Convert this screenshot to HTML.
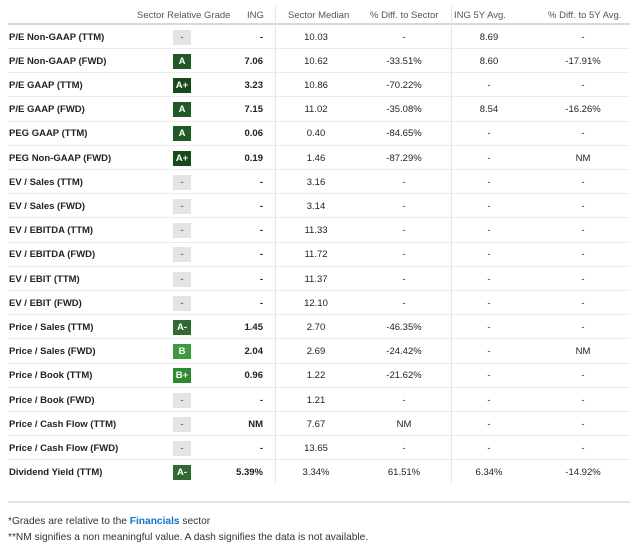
<!DOCTYPE html>
<html><head><meta charset="utf-8"><style>
body{margin:0;width:640px;height:549px;background:#fff;font-family:"Liberation Sans",Arial,sans-serif;font-size:9.5px;color:#222;position:relative;overflow:hidden}
.a{position:absolute}
.h{top:10px;color:#555;font-size:9.5px;white-space:nowrap}
.r{position:absolute;left:8px;width:622px;height:24px;border-bottom:1px solid #ececec}
.r div{position:absolute;top:1.5px;line-height:24px;white-space:nowrap}
.l{left:1px;font-weight:bold;color:#222}
.r .g{left:165px;top:5.5px;width:18px;height:15px;line-height:15px;text-align:center;font-weight:bold;color:#fff;font-size:9.5px}
.ing{right:367px;font-weight:bold;text-align:right}
.c1{left:268px;width:80px;text-align:center}
.c2{left:350px;width:92px;text-align:center}
.c3{left:443px;width:76px;text-align:center}
.c4{left:525px;width:100px;text-align:center}
.r .gr{background:#e3e4e6;color:#777}
.A{background:#1f5a26}.Ap{background:#174a1a}.Am{background:#2f6a30}.B{background:#3e9a3e}.Bp{background:#2e8a30}
</style></head><body>
<div class="a h" style="left:137px">Sector Relative Grade</div>
<div class="a h" style="left:247px">ING</div>
<div class="a h" style="left:288px">Sector Median</div>
<div class="a h" style="left:370px">% Diff. to Sector</div>
<div class="a h" style="left:454px">ING 5Y Avg.</div>
<div class="a h" style="left:548px">% Diff. to 5Y Avg.</div>
<div class="a" style="left:8px;top:23px;width:622px;height:2px;background:#d9d9d9"></div>
<div class="a" style="left:275px;top:6px;width:1px;height:478px;background:#e6e6e6"></div>
<div class="a" style="left:451px;top:6px;width:1px;height:478px;background:#e6e6e6"></div>
<div id="t"></div>
<div class="a" style="left:8px;top:501px;width:622px;height:2px;background:#e6e6e6"></div>
<div class="a" style="left:8px;top:516px;font-size:10.2px;color:#333">*Grades are relative to the <span style="color:#1a6fd0;font-weight:bold">Financials</span> sector</div>
<div class="a" style="left:8px;top:532px;font-size:10.2px;color:#333">**NM signifies a non meaningful value. A dash signifies the data is not available.</div>
<script>
var d=[
["P/E Non-GAAP (TTM)","-","gr","-","10.03","-","8.69","-"],
["P/E Non-GAAP (FWD)","A","A","7.06","10.62","-33.51%","8.60","-17.91%"],
["P/E GAAP (TTM)","A+","Ap","3.23","10.86","-70.22%","-","-"],
["P/E GAAP (FWD)","A","A","7.15","11.02","-35.08%","8.54","-16.26%"],
["PEG GAAP (TTM)","A","A","0.06","0.40","-84.65%","-","-"],
["PEG Non-GAAP (FWD)","A+","Ap","0.19","1.46","-87.29%","-","NM"],
["EV / Sales (TTM)","-","gr","-","3.16","-","-","-"],
["EV / Sales (FWD)","-","gr","-","3.14","-","-","-"],
["EV / EBITDA (TTM)","-","gr","-","11.33","-","-","-"],
["EV / EBITDA (FWD)","-","gr","-","11.72","-","-","-"],
["EV / EBIT (TTM)","-","gr","-","11.37","-","-","-"],
["EV / EBIT (FWD)","-","gr","-","12.10","-","-","-"],
["Price / Sales (TTM)","A-","Am","1.45","2.70","-46.35%","-","-"],
["Price / Sales (FWD)","B","B","2.04","2.69","-24.42%","-","NM"],
["Price / Book (TTM)","B+","Bp","0.96","1.22","-21.62%","-","-"],
["Price / Book (FWD)","-","gr","-","1.21","-","-","-"],
["Price / Cash Flow (TTM)","-","gr","NM","7.67","NM","-","-"],
["Price / Cash Flow (FWD)","-","gr","-","13.65","-","-","-"],
["Dividend Yield (TTM)","A-","Am","5.39%","3.34%","61.51%","6.34%","-14.92%"]];
var h="";d.forEach(function(r,i){var top=24+i*24.2;
h+='<div class="r" style="top:'+top+'px;'+(i==18?'border-bottom:none':'')+'"><div class="l">'+r[0]+'</div><div class="g '+r[2]+'">'+r[1]+'</div><div class="ing">'+r[3]+'</div><div class="c1">'+r[4]+'</div><div class="c2">'+r[5]+'</div><div class="c3">'+r[6]+'</div><div class="c4">'+r[7]+'</div></div>';});
document.getElementById("t").innerHTML=h;
</script>
</body></html>
